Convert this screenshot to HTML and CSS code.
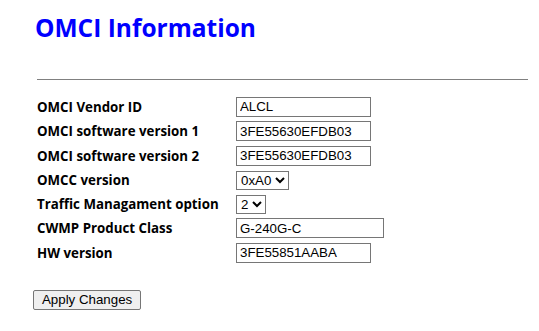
FILE: index.html
```html
<!DOCTYPE html>
<html>
<head>
  <meta charset="UTF-8">
  <title>OMCI Information</title>
  <link rel="stylesheet" href="styles.css">
</head>
<body>
<div class="page">
  <h1 class="title">OMCI Information</h1>
  <hr class="rule">
  <form>
    <table class="info">
      <tr>
        <th>OMCI Vendor ID</th>
        <td><input class="field" type="text" value="ALCL"></td>
      </tr>
      <tr>
        <th>OMCI software version 1</th>
        <td><input class="field" type="text" value="3FE55630EFDB03"></td>
      </tr>
      <tr>
        <th>OMCI software version 2</th>
        <td><input class="field" type="text" value="3FE55630EFDB03"></td>
      </tr>
      <tr>
        <th>OMCC version</th>
        <td><select class="choice"><option>0xA0</option></select></td>
      </tr>
      <tr>
        <th>Traffic Managament option</th>
        <td><select class="choice"><option>2</option></select></td>
      </tr>
      <tr>
        <th>CWMP Product Class</th>
        <td><input class="field wide" type="text" value="G-240G-C"></td>
      </tr>
      <tr>
        <th>HW version</th>
        <td><input class="field" type="text" value="3FE55851AABA"></td>
      </tr>
    </table>
    <button class="apply" type="button">Apply Changes</button>
  </form>
</div>
</body>
</html>
```

FILE: styles.css
```css
body {
  margin: 0;
  background: #fff;
  font-family: "Open Sans", Arial, sans-serif;
}
.page {
  padding: 12px 11px 0 35px;
}
.title {
  margin: 0;
  color: #0000ff;
  font-size: 24.5px;
  font-weight: bold;
  line-height: 32px;
}
.rule {
  margin: 35px 0 12px 2px;
  border: 0;
  border-top: 1px solid #808080;
  height: 0;
}
.info {
  border-collapse: separate;
  border-spacing: 0 2.3px;
  margin-left: 0;
}
.info th {
  width: 199px;
  padding: 3px 0 0 2px;
  text-align: left;
  font-size: 13.3px;
  font-weight: bold;
  color: #000;
  white-space: nowrap;
}
.info td {
  padding: 0;
  height: 22px;
}
.field {
  box-sizing: border-box;
  width: 135px;
  height: 20px;
  padding: 1px 3px;
  border: 1px solid #767676;
  font-family: Arial, "Liberation Sans", sans-serif;
  font-size: 13.3px;
  color: #000;
}
.field.wide {
  width: 148px;
}
.choice {
  height: 19px;
  font-family: Arial, "Liberation Sans", sans-serif;
  font-size: 13.3px;
  border: 1px solid #767676;
  border-radius: 0;
  background: #fff;
}
.apply {
  margin: 25px 0 0 -2px;
  height: 20px;
  padding: 0 8px;
  font-family: Arial, "Liberation Sans", sans-serif;
  font-size: 13.3px;
  color: #000;
  background: #efefef;
  border: 1px solid #767676;
  border-radius: 2px;
}
```
